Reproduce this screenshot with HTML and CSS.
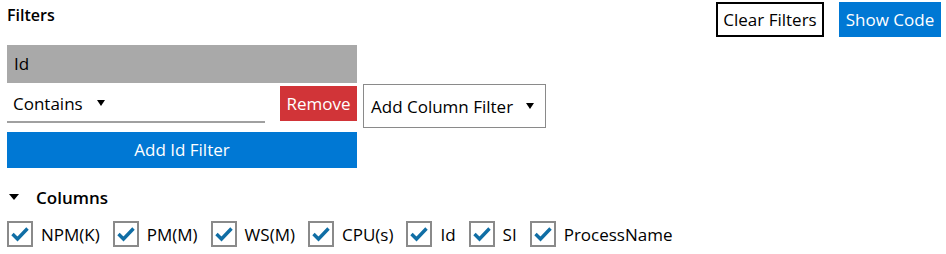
FILE: index.html
```html
<!DOCTYPE html>
<html>
<head>
<meta charset="utf-8">
<link rel="stylesheet" href="styles.css">
</head>
<body>
<div class="page">
  <div class="header">
    <div class="title">Filters</div>
    <div class="actions">
      <button class="btn-outline">Clear Filters</button>
      <button class="btn-primary">Show Code</button>
    </div>
  </div>
  <div class="filters">
    <div class="filter-card">
      <div class="filter-name">Id</div>
      <div class="filter-row">
        <div class="select-line">
          <span>Contains</span>
          <span class="caret"></span>
        </div>
        <button class="btn-danger">Remove</button>
      </div>
      <button class="btn-add">Add Id Filter</button>
    </div>
    <div class="add-column">
      <span>Add Column Filter</span>
      <span class="caret"></span>
    </div>
  </div>
  <div class="columns-head">
    <span class="caret caret-big"></span>
    <span class="columns-title">Columns</span>
  </div>
  <div class="checks">
    <label class="check"><span class="box"><svg viewBox="0 0 22 22"><path d="M3.5 11 L8.5 16 L18.5 5.5"/></svg></span><span>NPM(K)</span></label>
    <label class="check"><span class="box"><svg viewBox="0 0 22 22"><path d="M3.5 11 L8.5 16 L18.5 5.5"/></svg></span><span>PM(M)</span></label>
    <label class="check"><span class="box"><svg viewBox="0 0 22 22"><path d="M3.5 11 L8.5 16 L18.5 5.5"/></svg></span><span>WS(M)</span></label>
    <label class="check"><span class="box"><svg viewBox="0 0 22 22"><path d="M3.5 11 L8.5 16 L18.5 5.5"/></svg></span><span>CPU(s)</span></label>
    <label class="check"><span class="box"><svg viewBox="0 0 22 22"><path d="M3.5 11 L8.5 16 L18.5 5.5"/></svg></span><span>Id</span></label>
    <label class="check"><span class="box"><svg viewBox="0 0 22 22"><path d="M3.5 11 L8.5 16 L18.5 5.5"/></svg></span><span>SI</span></label>
    <label class="check"><span class="box"><svg viewBox="0 0 22 22"><path d="M3.5 11 L8.5 16 L18.5 5.5"/></svg></span><span>ProcessName</span></label>
  </div>
</div>
</body>
</html>
```
FILE: styles.css
```css
* { box-sizing: border-box; }
body {
  margin: 0;
  background: #fff;
  font-family: "Open Sans", "Noto Sans", sans-serif;
  font-size: 17px;
  color: #000;
}
.page { padding: 2px 5px 0 7px; }
.header {
  display: flex;
  justify-content: space-between;
  align-items: flex-start;
  height: 43px;
}
.title {
  font-weight: 600;
  font-size: 16px;
  line-height: 20px;
  padding-top: 3px;
}
.actions { display: flex; gap: 15px; }
button {
  font-family: inherit;
  font-size: 17px;
  line-height: 20px;
  cursor: pointer;
}
.btn-outline {
  height: 35px;
  width: 108px;
  border: 2px solid #000;
  background: #fff;
  color: #000;
  padding: 0;
}
.btn-primary {
  height: 35px;
  width: 102px;
  border: none;
  background: #0078d4;
  color: #fff;
  padding: 0;
}
.filters { display: flex; align-items: flex-start; gap: 6px; }
.filter-card { width: 350px; display: flex; flex-direction: column; }
.filter-name {
  height: 38px;
  background: #a9a9a9;
  padding: 7px 7px;
  line-height: 24px;
}
.filter-row {
  display: flex;
  justify-content: space-between;
  margin-top: 3px;
  height: 46px;
}
.select-line {
  width: 258px;
  height: 37px;
  border-bottom: 2px solid #a0a0a0;
  display: flex;
  align-items: center;
  gap: 14px;
  padding-left: 6px;
  padding-bottom: 1px;
}
.caret {
  width: 0; height: 0;
  border-left: 4.5px solid transparent;
  border-right: 4.5px solid transparent;
  border-top: 6px solid #000;
  display: inline-block;
}
.btn-danger {
  width: 77px;
  height: 35px;
  border: none;
  background: #d13438;
  color: #fff;
  padding: 0;
}
.btn-add {
  height: 36px;
  border: none;
  background: #0078d4;
  color: #fff;
  padding: 0;
}
.add-column {
  margin-top: 39px;
  width: 183px;
  height: 44px;
  border: 1px solid #8a8a8a;
  display: flex;
  align-items: center;
  justify-content: space-between;
  padding: 0 11px 0 7px;
}
.columns-head {
  display: flex;
  align-items: center;
  margin-top: 17px;
  height: 24px;
  padding-left: 2px;
}
.caret-big { border-left-width: 5.5px; border-right-width: 5.5px; border-top-width: 6px; }
.columns-title { font-weight: 600; margin-left: 17px; }
.checks {
  display: flex;
  gap: 13px;
  margin-top: 12px;
}
.check { display: flex; align-items: center; gap: 8px; }
.box {
  width: 26px;
  height: 26px;
  border: 2px solid #8a8a8a;
  display: flex;
}
.box svg { width: 22px; height: 22px; }
.box path {
  fill: none;
  stroke: #106ea5;
  stroke-width: 3.4;
  stroke-linecap: butt;
  stroke-linejoin: miter;
}
```
